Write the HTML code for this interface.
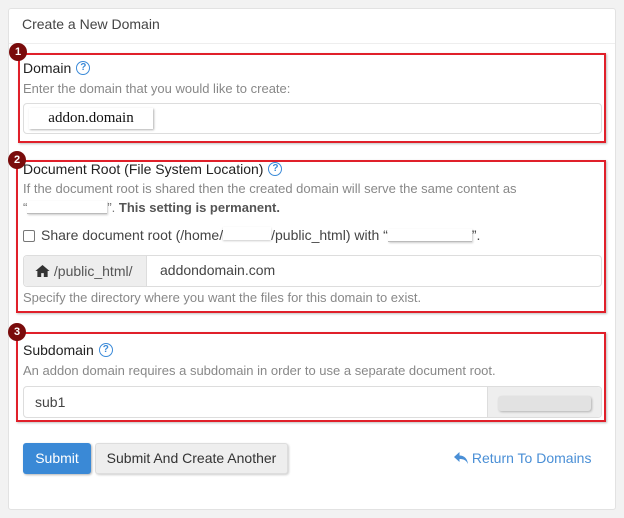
<!DOCTYPE html>
<html><head><meta charset="utf-8"><style>
*{box-sizing:border-box;margin:0;padding:0}
body{width:624px;height:518px;background:#f2f2f2;font-family:"Liberation Sans",sans-serif;color:#333;position:relative;overflow:hidden}
.a{position:absolute}
.panel{left:8px;top:8px;width:608px;height:502px;background:#fff;border:1px solid #e2e2e2;border-radius:3px}
.red{border:2px solid #e0202a;box-shadow:1px 1px 2px rgba(0,0,0,.25)}
.badge{width:18px;height:18px;border-radius:50%;background:#7a0c0c;color:#fff;font-size:11px;font-weight:bold;text-align:center;line-height:18px}
.lbl{font-size:14px;color:#222}
.desc{font-size:13px;color:#888}
.q{display:inline-block;width:14px;height:14px;border:1.5px solid #3b8ad8;border-radius:50%;color:#3b8ad8;font-size:10px;font-weight:bold;text-align:center;line-height:11px;vertical-align:top;margin-top:1px;margin-left:5px}
.inp{border:1px solid #ddd;border-radius:4px;background:#fff}
.blank{display:inline-block;background:#fff;border-bottom:1px solid #bbb;box-shadow:1px 1px 2px rgba(0,0,0,.2);height:13px;vertical-align:-2px}
</style></head><body>
<div class="a panel"></div>
<div class="a" style="left:22px;top:16px;font-size:14px;color:#444">Create a New Domain</div>
<div class="a" style="left:9px;top:43px;width:606px;height:1px;background:#eee"></div>

<div class="a red" style="left:18px;top:53px;width:588px;height:90px"></div>
<div class="a badge" style="left:9px;top:43px">1</div>
<div class="a lbl" style="left:23px;top:60px">Domain<span class="q">?</span></div>
<div class="a desc" style="left:23px;top:81px">Enter the domain that you would like to create:</div>
<div class="a inp" style="left:23px;top:103px;width:579px;height:31px"></div>
<div class="a" style="left:29px;top:108px;width:124px;height:21px;background:#fff;box-shadow:1px 1px 2px rgba(0,0,0,.3);font-family:'Liberation Serif',serif;font-size:15px;text-align:center;line-height:21px;color:#111">addon.domain</div>

<div class="a red" style="left:16px;top:160px;width:590px;height:153px"></div>
<div class="a badge" style="left:8px;top:151px">2</div>
<div class="a lbl" style="left:23px;top:161px">Document Root (File System Location)<span class="q">?</span></div>
<div class="a desc" style="left:23px;top:181px">If the document root is shared then the created domain will serve the same content as</div>
<div class="a" style="left:23px;top:200px;font-size:13px;color:#777">“<span class="blank" style="width:80px"></span>”. <b style="color:#555">This setting is permanent.</b></div>
<div class="a" style="left:23px;top:230px;width:12px;height:12px;border:1px solid #777;border-radius:2px;background:#fff"></div>
<div class="a" style="left:41px;top:227px;font-size:14px;color:#444">Share document root (/home/<span style="display:inline-block;width:48px;height:13px;background:#fff;box-shadow:0 1px 2px rgba(0,0,0,.2)"></span>/public_html) with “<span class="blank" style="width:84px"></span>”.</div>
<div class="a inp" style="left:23px;top:255px;width:579px;height:32px"></div>
<div class="a" style="left:24px;top:256px;width:123px;height:30px;background:#eee;border-right:1px solid #ddd;border-radius:4px 0 0 4px;font-size:14px;color:#555;line-height:30px;padding-left:11px">
<svg width="15" height="12" viewBox="0 0 13 11" style="vertical-align:-1px"><path d="M6.5 0L0 5.5h1.8V11h3.5V7.5h2.4V11h3.5V5.5H13z" fill="#333"/></svg> /public_html/</div>
<div class="a" style="left:160px;top:262px;font-size:14px;color:#444">addondomain.com</div>
<div class="a desc" style="left:23px;top:290px">Specify the directory where you want the files for this domain to exist.</div>

<div class="a red" style="left:16px;top:332px;width:590px;height:90px"></div>
<div class="a badge" style="left:8px;top:323px">3</div>
<div class="a lbl" style="left:23px;top:342px">Subdomain<span class="q">?</span></div>
<div class="a desc" style="left:23px;top:363px">An addon domain requires a subdomain in order to use a separate document root.</div>
<div class="a inp" style="left:23px;top:386px;width:579px;height:32px"></div>
<div class="a" style="left:487px;top:387px;width:114px;height:30px;background:#eee;border-left:1px solid #ddd;border-radius:0 4px 4px 0"></div>
<div class="a" style="left:498px;top:396px;width:93px;height:15px;background:#e2e2e2;border-radius:3px;box-shadow:1px 1px 2px rgba(0,0,0,.25)"></div>
<div class="a" style="left:35px;top:394px;font-size:14px;color:#444">sub1</div>

<div class="a" style="left:23px;top:443px;width:68px;height:31px;background:#3a89d6;border-radius:3px;color:#fff;font-size:14px;text-align:center;line-height:31px;box-shadow:1px 1px 2px rgba(0,0,0,.3)">Submit</div>
<div class="a" style="left:95px;top:443px;width:193px;height:31px;background:#eee;border:1px solid #ddd;border-radius:3px;color:#333;font-size:14px;text-align:center;line-height:29px;box-shadow:1px 1px 2px rgba(0,0,0,.2)">Submit And Create Another</div>
<div class="a" style="left:454px;top:450px;font-size:14px;color:#4a8fd6">
<svg width="14" height="12" viewBox="0 0 14 12" style="vertical-align:-1px"><path d="M5.5 0L0 5l5.5 5V7c4 0 6.5 1 8.5 5-.5-5-3.5-8.5-8.5-8.5z" fill="#4a8fd6"/></svg> Return To Domains</div>
</body></html>
